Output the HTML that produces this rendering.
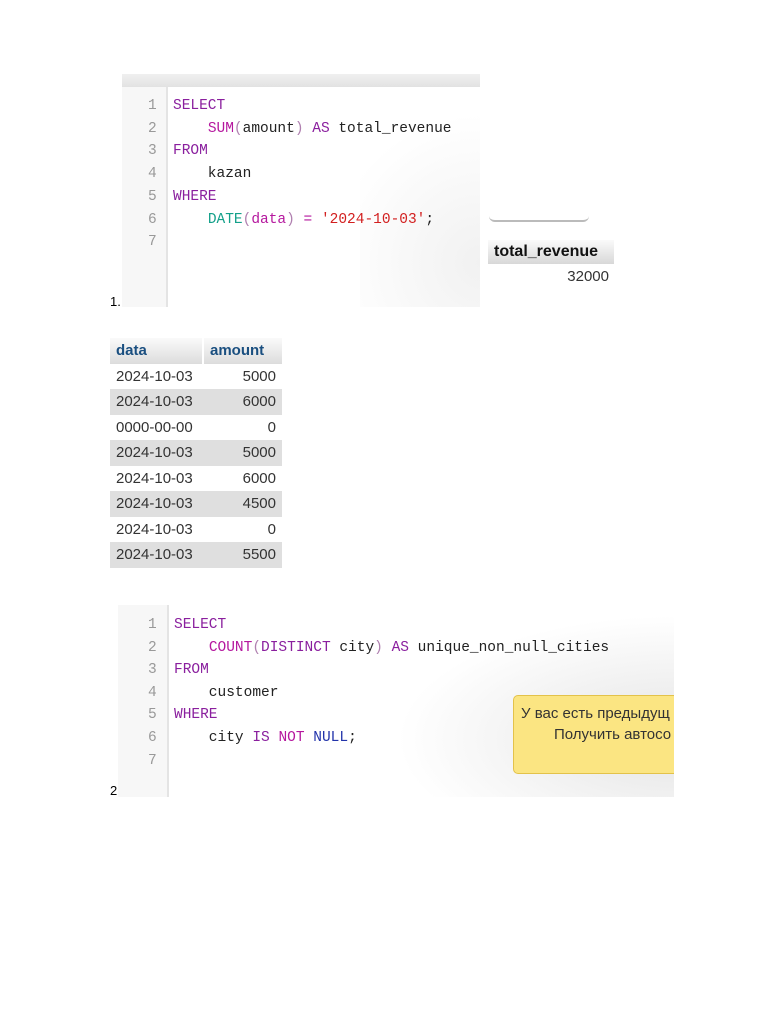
<!DOCTYPE html>
<html><head><meta charset="utf-8"><style>
body{margin:0;width:768px;height:1024px;background:#fff;position:relative;overflow:hidden;font-family:"Liberation Sans",sans-serif}
.abs{position:absolute}
.code{position:absolute;background:#fff;overflow:hidden}
.gut{position:absolute;left:0;top:0;bottom:0;background:#f7f7f7;border-right:2px solid #e4e4e4}
.ln{position:absolute;font-family:"Liberation Mono","DejaVu Sans Mono",monospace;font-size:14.5px;white-space:pre;color:#222}
.num{color:#999;text-align:right}
.k{color:#8a1f9e}.f{color:#b5179e}.p{color:#b080b0}.s{color:#d21f1f}.g{color:#14a08a}.b{color:#2233aa}
table{border-collapse:collapse;font-size:15px;color:#333}
td{height:25.5px;padding:0 6px}
</style></head><body>

<!-- block 1 -->
<div class="code" style="left:122px;top:74px;width:358px;height:233px">
 <div class="abs" style="left:0;top:0;width:358px;height:13px;background:linear-gradient(#f0f0f0,#e2e2e2)"></div>
 <div class="gut" style="top:13px;width:44px"></div>
 <div class="abs" style="right:0;top:13px;width:120px;height:220px;background:radial-gradient(circle at 100% 80%,#f1f1f1,#fff 70%)"></div>
</div>
<div class="ln num" style="left:148px;top:95px;line-height:22.7px">1
2
3
4
5
6
7</div>
<div class="ln" style="left:173px;top:95px;line-height:22.7px"><span class="k">SELECT</span>
    <span class="f">SUM</span><span class="p">(</span>amount<span class="p">)</span> <span class="k">AS</span> total_revenue
<span class="k">FROM</span>
    kazan
<span class="k">WHERE</span>
    <span class="g">DATE</span><span class="p">(</span><span class="f">data</span><span class="p">)</span> <span class="f">=</span> <span class="s">'2024-10-03'</span>;
</div>
<div class="abs" style="left:110px;top:294px;font-size:13px;color:#000">1.</div>

<div class="abs" style="left:489px;top:214px;width:100px;height:6px;border-bottom:2px solid #bbb;border-radius:0 0 6px 6px"></div>
<div class="abs" style="left:488px;top:240px;width:126px;height:24px;background:linear-gradient(#fafafa,#d8d8d8);font-weight:bold;font-size:16px;line-height:24px;padding-left:6px;box-sizing:border-box;color:#111">total_revenue</div>
<div class="abs" style="left:560px;top:268px;width:49px;text-align:right;font-size:15px;color:#333">32000</div>

<!-- table -->
<table class="abs" style="left:110px;top:338px;width:172px">
<tr style="background:linear-gradient(#fafafa,#dcdcdc);color:#1a4f80;font-weight:bold"><td style="height:24px;width:80px">data</td><td style="border-left:2px solid #fff">amount</td></tr>
<tr><td>2024-10-03</td><td align="right">5000</td></tr>
<tr style="background:#dfdfdf"><td>2024-10-03</td><td align="right">6000</td></tr>
<tr><td>0000-00-00</td><td align="right">0</td></tr>
<tr style="background:#dfdfdf"><td>2024-10-03</td><td align="right">5000</td></tr>
<tr><td>2024-10-03</td><td align="right">6000</td></tr>
<tr style="background:#dfdfdf"><td>2024-10-03</td><td align="right">4500</td></tr>
<tr><td>2024-10-03</td><td align="right">0</td></tr>
<tr style="background:#dfdfdf"><td>2024-10-03</td><td align="right">5500</td></tr>
</table>

<!-- block 2 -->
<div class="code" style="left:118px;top:605px;width:556px;height:192px">
 <div class="gut" style="width:49px"></div>
 <div class="abs" style="right:0;top:0;width:300px;height:192px;background:radial-gradient(ellipse at 100% 70%,#e4e4e4,#fff 65%)"></div>
 <div class="abs" style="left:395px;top:90px;width:170px;height:79px;background:#fbe582;border:1px solid #e3c24a;border-radius:5px;box-sizing:border-box"></div>
</div>
<div class="ln num" style="left:148px;top:614px;line-height:22.6px">1
2
3
4
5
6
7</div>
<div class="ln" style="left:174px;top:614px;line-height:22.6px"><span class="k">SELECT</span>
    <span class="f">COUNT</span><span class="p">(</span><span class="k">DISTINCT</span> city<span class="p">)</span> <span class="k">AS</span> unique_non_null_cities
<span class="k">FROM</span>
    customer
<span class="k">WHERE</span>
    city <span class="k">IS</span> <span class="f">NOT</span> <span class="b">NULL</span>;
</div>
<div class="abs" style="left:110px;top:783px;font-size:13px;color:#000">2</div>
<div class="abs" style="left:521px;top:705px;font-size:15px;color:#333;white-space:nowrap;width:153px;overflow:hidden">У вас есть предыдущ</div>
<div class="abs" style="left:554px;top:726px;font-size:15px;color:#333;white-space:nowrap;width:120px;overflow:hidden">Получить автосо</div>
</body></html>
